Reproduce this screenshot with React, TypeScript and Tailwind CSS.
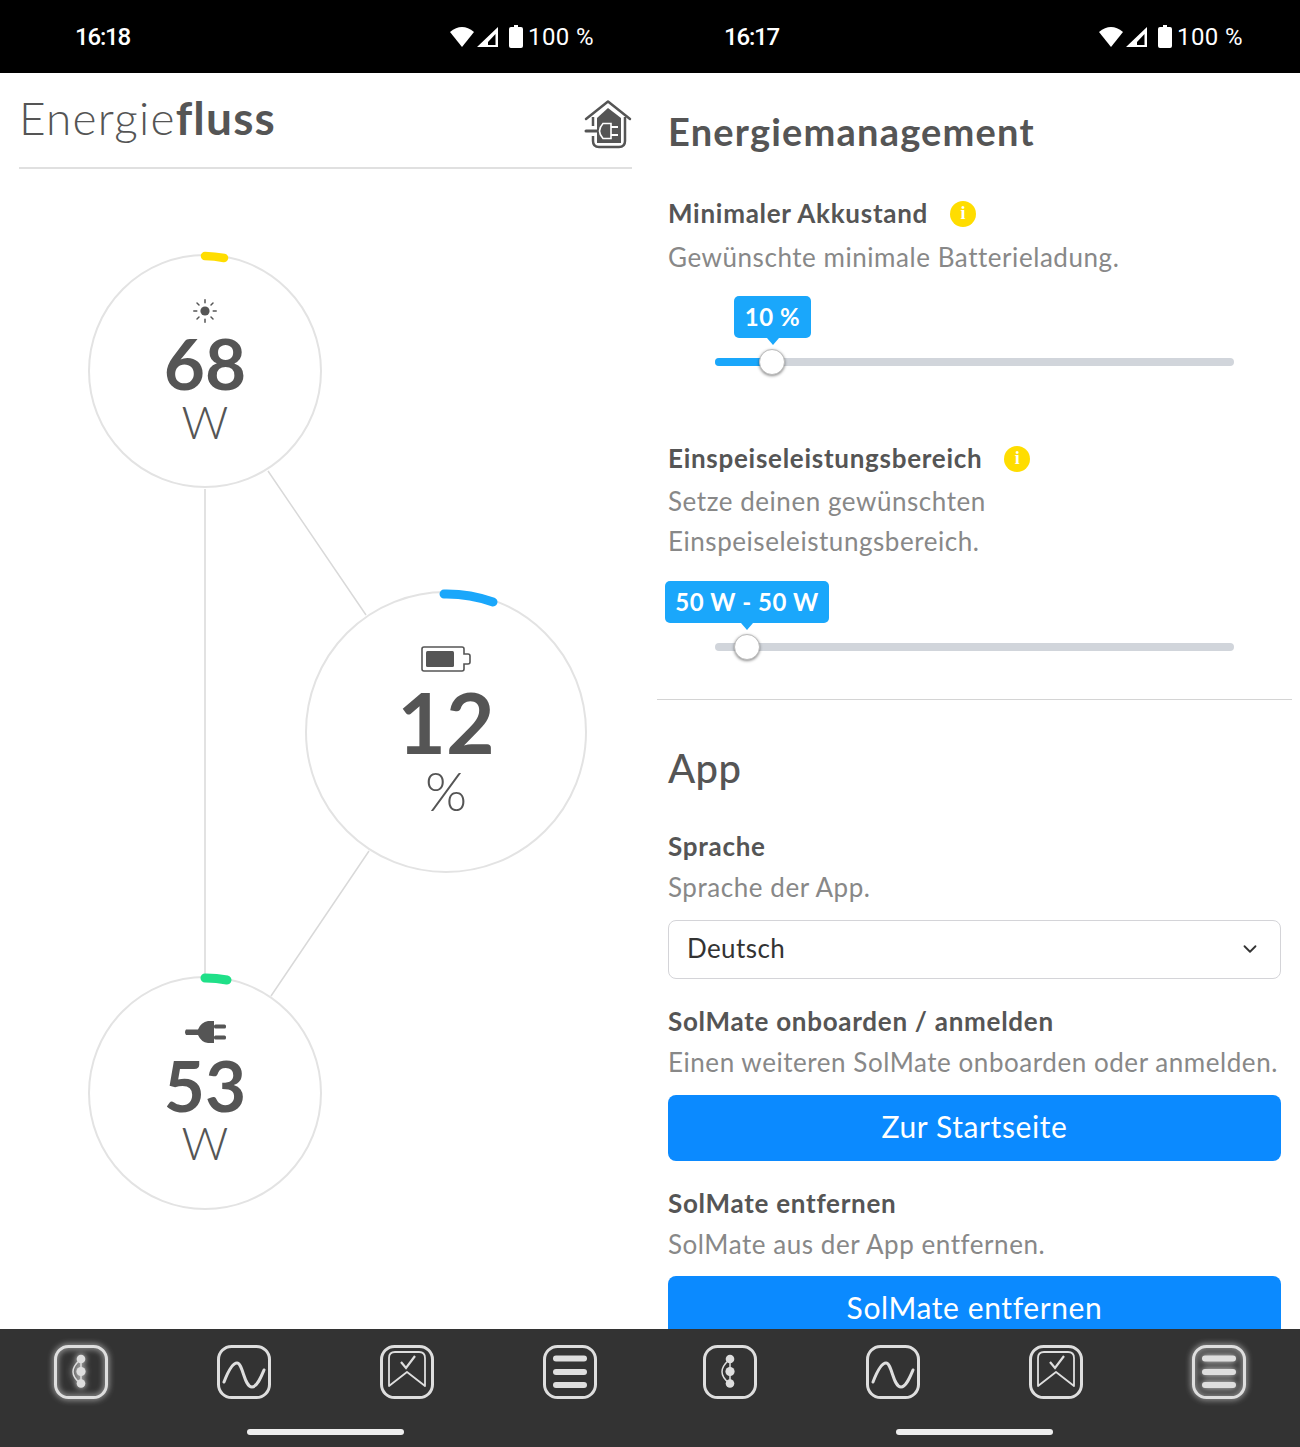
import { ChevronDown } from "lucide-react"

const sans = "font-['Lato','Liberation_Sans',sans-serif]"

function StatusBar({ time }: { time: string }) {
  return (
    <div className="h-[73px] bg-black font-['Roboto',sans-serif] text-[24px] text-white">
      <div className="flex h-full w-[649px] items-center pl-[75px] pr-[55px]">
        <span className="font-medium tracking-[-1.2px]">{time}</span>
        <div className="ml-auto flex items-center">
          <svg width="50" height="24" viewBox="0 0 50 24" fill="white">
            <path d="M1 7 Q13 -3 25 7 L13 22 Z" />
            <path d="M49 2 V22 H28 Z M46.5 9 L39 17 V20 H46.5 Z" fillRule="evenodd" />
          </svg>
          <svg className="ml-[10px]" width="14" height="23" viewBox="0 0 14 23" fill="white">
            <path d="M5 0 H9 V2 H12 Q14 2 14 4 V21 Q14 23 12 23 H2 Q0 23 0 21 V4 Q0 2 2 2 H5 Z" />
          </svg>
          <span className="ml-[5px] w-[66px] whitespace-nowrap tracking-[0.4px]">100 %</span>
        </div>
      </div>
    </div>
  )
}

function NavIcon({ kind, active }: { kind: number; active?: boolean }) {
  return (
    <svg
      width="56"
      height="56"
      viewBox="-1 -1 56 56"
      fill="none"
      stroke="#dedede"
      className={active ? "drop-shadow-[0_0_3px_rgba(255,255,255,0.9)]" : ""}
    >
      <rect x="1.5" y="1.5" width="51" height="51" rx="13" strokeWidth="3" />
      {kind === 0 && (
        <g>
          <path d="M27 14 V39" strokeWidth="1.5" />
          <path d="M26 15 Q12 27 26 38" strokeWidth="1.5" />
          <circle cx="27" cy="14" r="4.3" fill="#dedede" stroke="none" />
          <circle cx="27" cy="26.5" r="4.6" fill="#dedede" stroke="none" />
          <circle cx="27" cy="38.5" r="4.3" fill="#dedede" stroke="none" />
        </g>
      )}
      {kind === 1 && (
        <path d="M7 37 C12 24 16 18 20 18 C26 18 27 42 35 42 C40 42 44 32 47 25" strokeWidth="3" strokeLinecap="round" />
      )}
      {kind === 2 && (
        <g strokeWidth="1.8">
          <path d="M9 41 V13 Q9 7 15 7 H39 Q45 7 45 13 V41 L27 27 Z" strokeLinejoin="round" />
          <path d="M21 17 L26 23 L35 11" strokeWidth="2.2" />
        </g>
      )}
      {kind === 3 && (
        <g strokeWidth="6" strokeLinecap="round">
          <path d="M13 13.5 H41" />
          <path d="M13 27 H41" />
          <path d="M13 40 H41" />
        </g>
      )}
    </svg>
  )
}

function BottomNav({ active }: { active: number }) {
  return (
    <div className="flex h-[118px] shrink-0 flex-col bg-[#333333]">
      <div className="grid h-[86px] grid-cols-[repeat(4,163px)] items-center">
        {[0, 1, 2, 3].map((k) => (
          <div key={k} className="flex justify-center pr-[2px]">
            <NavIcon kind={k} active={k === active} />
          </div>
        ))}
      </div>
      <div className="ml-[247px] mt-[14px] h-[6px] w-[157px] rounded-full bg-[#eeeeee]" />
    </div>
  )
}

function HouseIcon() {
  return (
    <svg width="48" height="50" viewBox="584 99 48 50" fill="none" stroke="#555555">
      <path d="M586 119 L608 101.5 L630 119" strokeWidth="2.5" strokeLinecap="round" strokeLinejoin="round" />
      <path d="M625 117 V141 Q625 147 619 147 H599 Q593 147 593 141 V136" strokeWidth="2.5" />
      <path d="M593 117 V126" strokeWidth="2.5" />
      <path d="M597 118 L608 108 L621 118 V143 H597 Z" fill="#555555" stroke="none" />
      <path d="M586 131 H600" strokeWidth="3" strokeLinecap="round" />
      <path d="M603 123.5 H611 V138.5 H603 Q596 131 603 123.5 Z" fill="#555555" stroke="white" strokeWidth="1.6" />
      <path d="M611 127 H618 M611 135 H618" stroke="white" strokeWidth="2" />
    </svg>
  )
}

function SunIcon() {
  return (
    <svg width="24" height="24" viewBox="0 0 24 24" stroke="#555555" strokeWidth="1.5" strokeLinecap="round">
      <circle cx="12" cy="12" r="4.6" fill="#555555" stroke="none" />
      <path d="M12 0.8 V3.8 M12 20.2 V23.2 M0.8 12 H3.8 M20.2 12 H23.2 M4 4 L6 6 M18 18 L20 20 M4 20 L6 18 M18 6 L20 4" />
    </svg>
  )
}

function BatteryIcon() {
  return (
    <svg width="50" height="26" viewBox="0 0 50 26" fill="none" stroke="#555555" strokeWidth="1.6">
      <path d="M3 1 H41 Q43 1 43 3 V8 H47 Q49 8 49 10 V16 Q49 18 47 18 H43 V23 Q43 25 41 25 H3 Q1 25 1 23 V3 Q1 1 3 1 Z" />
      <rect x="5" y="5" width="28" height="16" rx="1.5" fill="#555555" stroke="none" />
    </svg>
  )
}

function PlugIcon() {
  return (
    <svg width="42" height="24" viewBox="0 0 42 24" fill="#555555">
      <path d="M2 9.5 H14 Q17 2 24 1 H30 V23 H24 Q17 22 14 15 H2 Q0 12 2 9.5 Z" />
      <rect x="30" y="4.5" width="12" height="4" rx="1.5" />
      <rect x="30" y="15.5" width="12" height="4" rx="1.5" />
    </svg>
  )
}

function EnergyFlow() {
  return (
    <div className="relative flex-1 overflow-hidden bg-white text-[#555555]">
      <div className="ml-[19px] mr-[17px] flex h-[96px] items-start justify-between border-b-2 border-[#e0e0e0]">
        <h1 className="mt-[16px] text-[46px] font-light leading-[58px] tracking-[1.2px] text-[#555555]">
          Energie<span className="font-bold">fluss</span>
        </h1>
        <div className="mt-[26px]">
          <HouseIcon />
        </div>
      </div>

      {/* lines and value arcs of the flow diagram */}
      <svg className="absolute left-0 top-0" width="649" height="1256" viewBox="0 73 649 1256" fill="none">
        <path d="M205 489 V976 M268 471 L366 615 M369 851 L271 996" stroke="#d9d9d9" strokeWidth="1.5" />
      </svg>

      <div className="absolute left-[88px] top-[181px] flex h-[234px] w-[234px] flex-col items-center rounded-full border-[2.5px] border-[#e3e3e3] bg-white pt-[43px]">
        <SunIcon />
        <span className="mt-[10px] text-[71px] font-bold leading-[60px]">68</span>
        <span className="mt-[9px] text-[46px] font-light leading-[40px]">W</span>
      </div>
      <div className="absolute left-[305px] top-[518px] flex h-[282px] w-[282px] flex-col items-center rounded-full border-[2.5px] border-[#e3e3e3] bg-white pt-[53px]">
        <BatteryIcon />
        <span className="mt-[15px] text-[84px] font-bold leading-[70px]">12</span>
        <span className="mt-[14px] text-[54px] font-light leading-[40px]">%</span>
      </div>
      <div className="absolute left-[88px] top-[903px] flex h-[234px] w-[234px] flex-col items-center rounded-full border-[2.5px] border-[#e3e3e3] bg-white pt-[42px]">
        <PlugIcon />
        <span className="mt-[11px] text-[71px] font-bold leading-[60px]">53</span>
        <span className="mt-[8px] text-[46px] font-light leading-[40px]">W</span>
      </div>

      <svg className="absolute left-0 top-0" width="649" height="1256" viewBox="0 73 649 1256" fill="none" strokeLinecap="round">
        <path d="M205 256 A115 115 0 0 1 224 258" stroke="#ffdd00" strokeWidth="8.5" />
        <path d="M444 594 A138 138 0 0 1 493 602" stroke="#1aa7fb" strokeWidth="9" />
        <path d="M205 978 A115 115 0 0 1 227 980" stroke="#1fe088" strokeWidth="9" />
      </svg>
    </div>
  )
}

function InfoDot() {
  return (
    <span className="ml-[22px] flex h-[26px] w-[26px] items-center justify-center rounded-full bg-[#ffdd00] font-['Liberation_Serif',serif] text-[18px] font-bold tracking-normal text-white">
      i
    </span>
  )
}

function Slider({ value, thumbLeft, fill, tipClass }: { value: string; thumbLeft: string; fill?: string; tipClass: string }) {
  return (
    <div className="relative ml-[47px] h-[8px] w-[519px] rounded-full bg-[#d1d5db]">
      {fill && <div className={`h-full rounded-full bg-[#1aa7fb] ${fill}`} />}
      <div className={`absolute top-[-62px] flex h-[42px] items-center justify-center whitespace-nowrap rounded-[5px] bg-[#1aa7fb] text-[24px] font-bold tracking-[0.5px] text-white ${tipClass}`}>
        {value}
        <span className="absolute left-1/2 top-[42px] -ml-[6px] h-0 w-0 border-x-[6px] border-t-[7px] border-x-transparent border-t-[#1aa7fb]" />
      </div>
      <div className={`absolute top-[-9px] h-[26px] w-[26px] rounded-full border border-[#bbbbbb] bg-white shadow-[0_1px_3px_rgba(0,0,0,0.45)] ${thumbLeft}`} />
    </div>
  )
}

function Label({ children, className = "" }: { children: React.ReactNode; className?: string }) {
  return (
    <h3 className={`flex h-[40px] items-center pb-[1px] text-[26px] font-bold tracking-[0.72px] text-[#555555] ${className}`}>
      {children}
    </h3>
  )
}

function Desc({ children, className = "" }: { children: React.ReactNode; className?: string }) {
  return <p className={`whitespace-nowrap text-[26px] leading-[40px] tracking-[0.55px] text-[#888888] ${className}`}>{children}</p>
}

function Settings() {
  return (
    <div className="flex-1 overflow-hidden bg-white px-[19px] pt-[33px]">
      <h2 className="text-[38px] font-bold leading-[50px] tracking-[1.2px] text-[#555555]">Energiemanagement</h2>

      <Label className="mt-[38px]">
        Minimaler Akkustand <InfoDot />
      </Label>
      <Desc className="mt-[3px]">Gewünschte minimale Batterieladung.</Desc>
      <div className="mt-[81px]">
        <Slider value="10 %" thumbLeft="left-[44px]" fill="w-[57px]" tipClass="left-[19px] w-[77px]" />
      </div>

      <Label className="mt-[73px]">
        Einspeiseleistungsbereich <InfoDot />
      </Label>
      <Desc className="mt-[2px]">
        Setze deinen gewünschten
        <br />
        Einspeiseleistungsbereich.
      </Desc>
      <div className="mt-[82px]">
        <Slider value="50 W - 50 W" thumbLeft="left-[19px]" tipClass="left-[-50px] w-[164px]" />
      </div>

      <div className="-mx-[11px] mt-[48px] h-[1px] bg-[#d4d4d4]" />

      <h2 className="mt-[43px] text-[40px] font-medium leading-[50px] tracking-[0.4px] text-[#555555]">App</h2>

      <Label className="mt-[34px]">Sprache</Label>
      <Desc>Sprache der App.</Desc>
      <div className="mt-[13px] flex h-[59px] items-center justify-between rounded-lg border border-[#d4d4d8] pb-[2px] pl-[18px] pr-[19px] text-[26px] tracking-[0.4px] text-[#333333]">
        Deutsch
        <ChevronDown size={22} strokeWidth={2} />
      </div>

      <Label className="mt-[23px]">SolMate onboarden / anmelden</Label>
      <Desc>Einen weiteren SolMate onboarden oder anmelden.</Desc>
      <button className="mt-[13px] flex h-[66px] w-full items-center justify-center rounded-lg bg-[#0b8aff] pb-[3px] text-[30px] tracking-[0.6px] text-white">
        Zur Startseite
      </button>

      <Label className="mt-[23px]">SolMate entfernen</Label>
      <Desc>SolMate aus der App entfernen.</Desc>
      <button className="mt-[12px] flex h-[66px] w-full items-center justify-center rounded-lg bg-[#0b8aff] pb-[3px] text-[30px] tracking-[0.6px] text-white">
        SolMate entfernen
      </button>
    </div>
  )
}

export default function App() {
  return (
    <div className={`grid h-[1447px] w-[1300px] grid-cols-[649px_651px] overflow-hidden ${sans}`}>
      <div className="flex h-[1447px] flex-col">
        <StatusBar time="16:18" />
        <EnergyFlow />
        <BottomNav active={0} />
      </div>
      <div className="flex h-[1447px] flex-col">
        <StatusBar time="16:17" />
        <Settings />
        <BottomNav active={3} />
      </div>
    </div>
  )
}
